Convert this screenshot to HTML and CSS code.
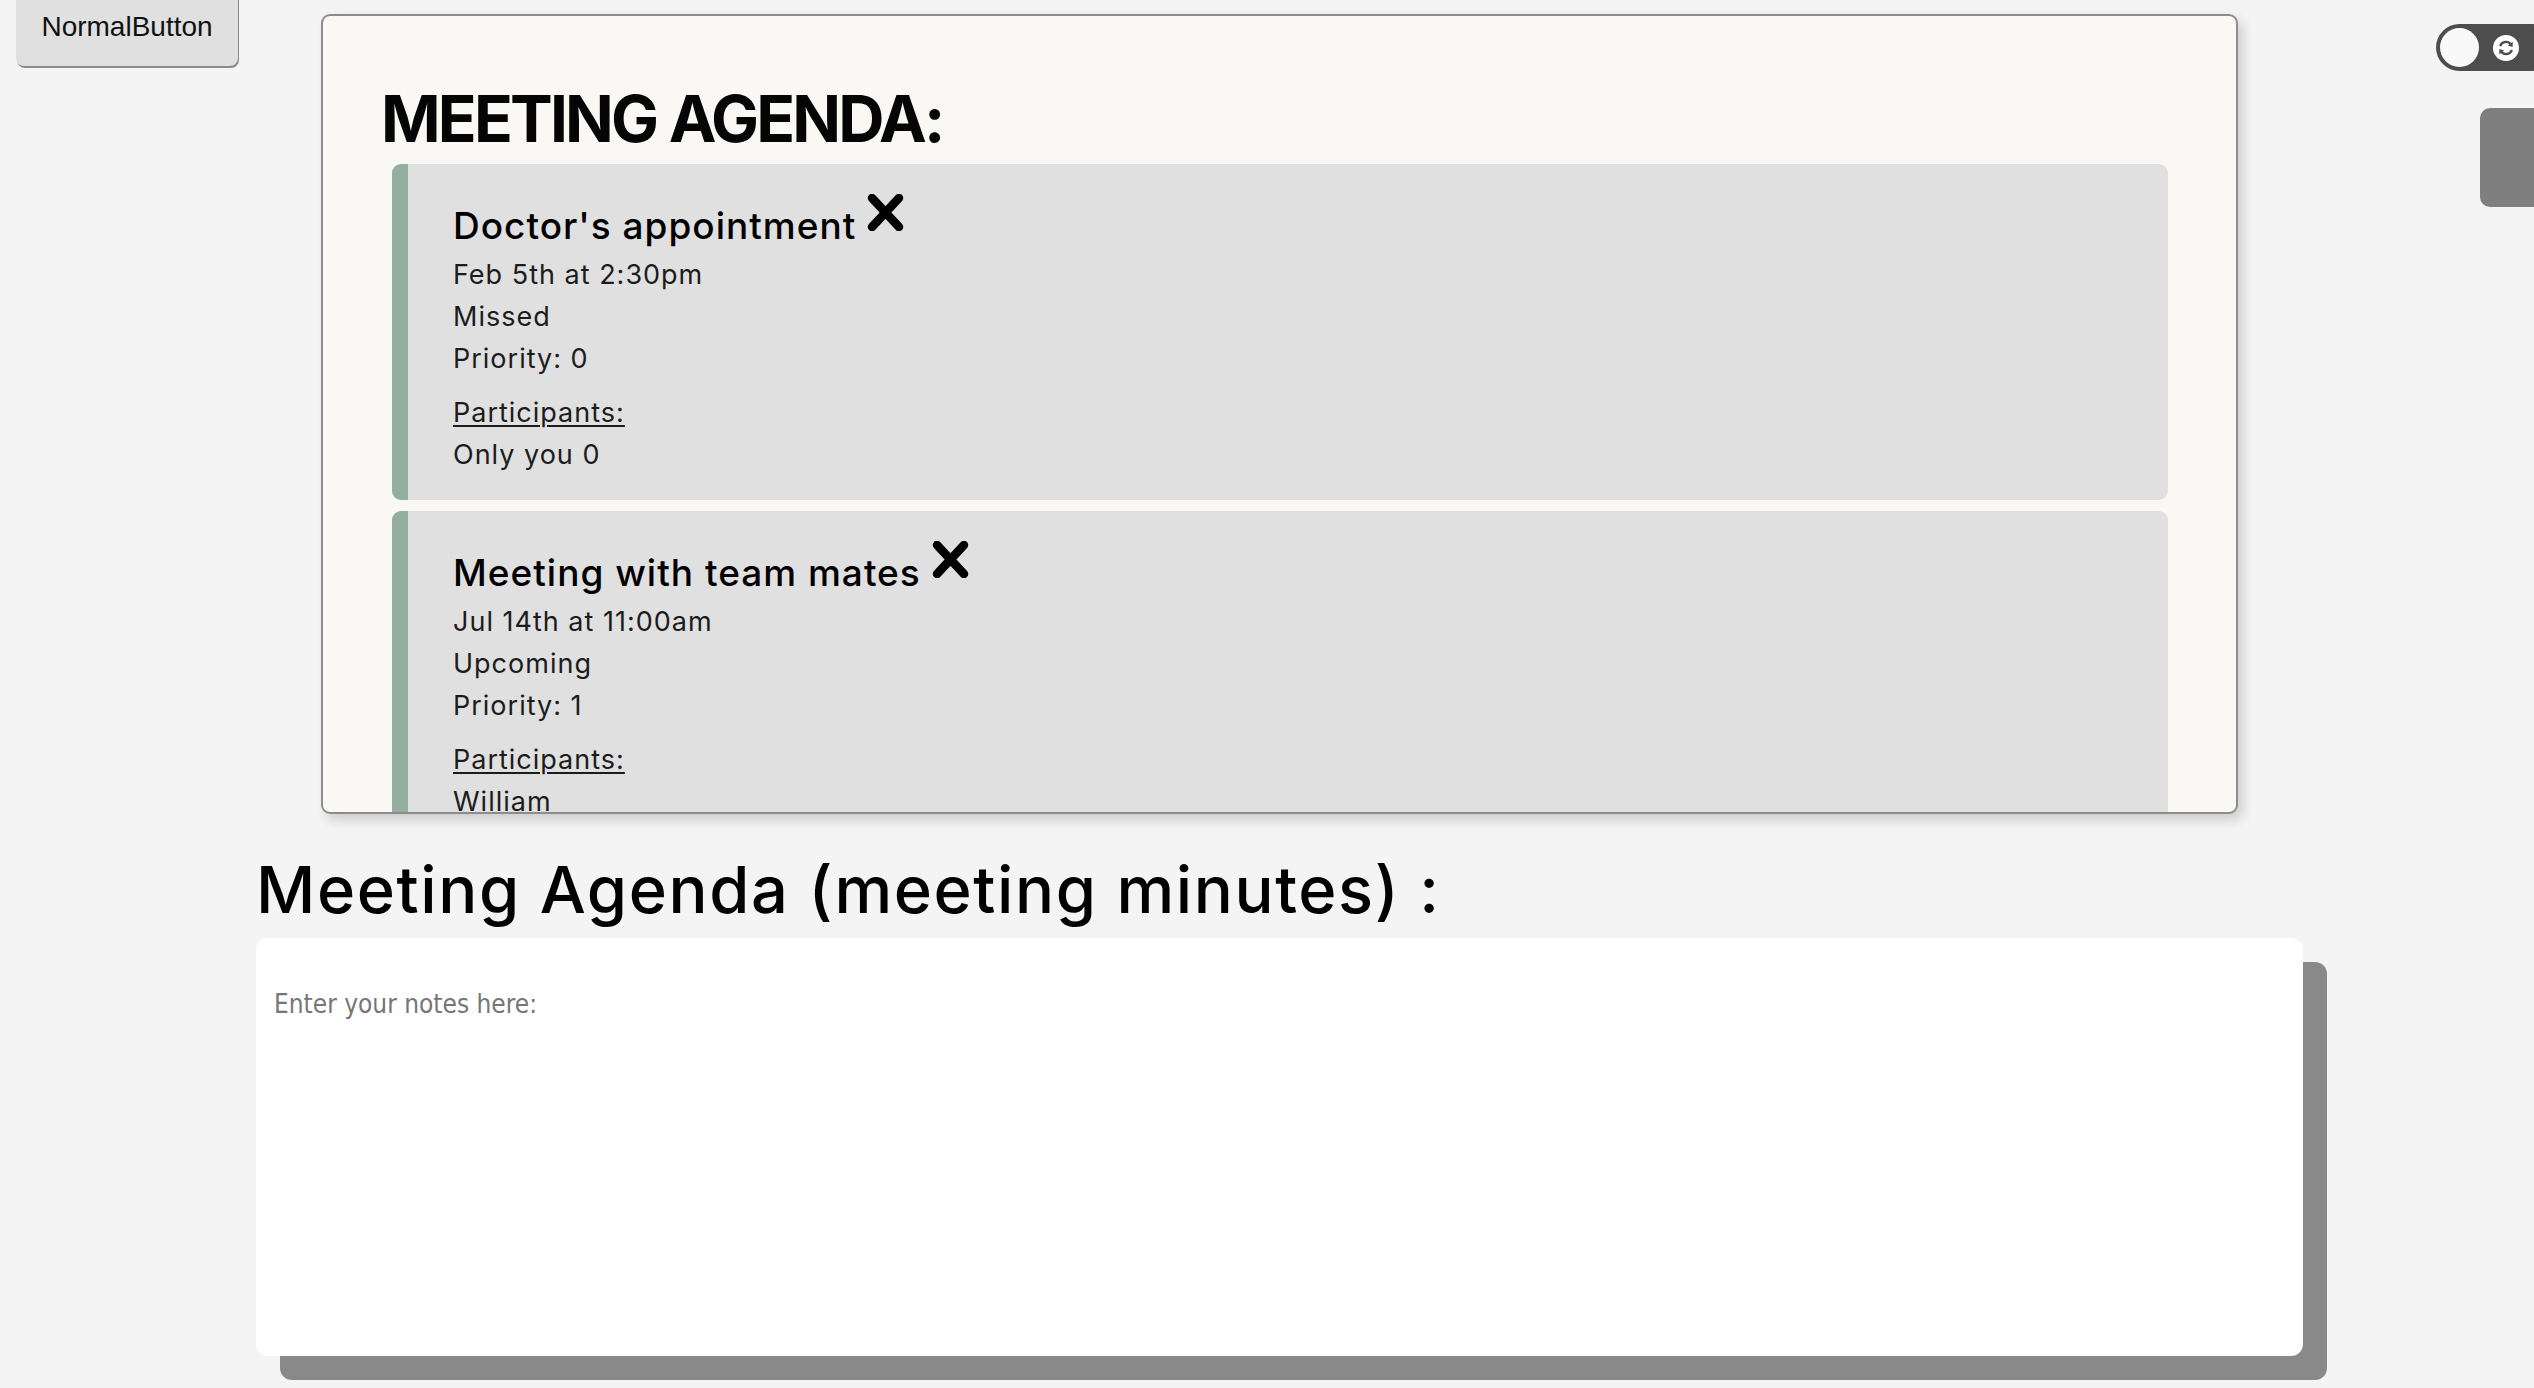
FILE: index.html
```html
<!DOCTYPE html>
<html lang="en">
<head>
<meta charset="utf-8">
<title>Meeting Agenda</title>
<link rel="stylesheet" href="styles.css">
</head>
<body>
<div class="top-row">
  <button class="normal-btn">NormalButton</button>
  <section class="agenda-panel">
    <h1 class="agenda-heading">MEETING AGENDA:</h1>
    <div class="cards">
      <article class="card">
        <h3 class="card-title"><span>Doctor's appointment</span>
          <svg class="x-icon" viewBox="0 0 37 37" aria-hidden="true"><path d="M5 4 L32 33 M32 4 L5 33" stroke="#000" stroke-width="8.5" stroke-linecap="round" fill="none"/></svg>
        </h3>
        <p class="line">Feb 5th at 2:30pm</p>
        <p class="line">Missed</p>
        <p class="line">Priority: 0</p>
        <p class="line participants">Participants:</p>
        <p class="line">Only you 0</p>
      </article>
      <article class="card">
        <h3 class="card-title"><span>Meeting with team mates</span>
          <svg class="x-icon" viewBox="0 0 37 37" aria-hidden="true"><path d="M5 4 L32 33 M32 4 L5 33" stroke="#000" stroke-width="8.5" stroke-linecap="round" fill="none"/></svg>
        </h3>
        <p class="line">Jul 14th at 11:00am</p>
        <p class="line">Upcoming</p>
        <p class="line">Priority: 1</p>
        <p class="line participants">Participants:</p>
        <p class="line">William</p>
      </article>
    </div>
  </section>
</div>

<section class="minutes">
  <h2 class="minutes-heading">Meeting Agenda (meeting minutes) :</h2>
  <textarea class="notes" placeholder="Enter your notes here:"></textarea>
</section>

<div class="theme-toggle">
  <span class="knob"></span>
  <span class="sync">
    <svg viewBox="0 0 26 26" aria-hidden="true">
      <circle cx="13" cy="13" r="13" fill="#ffffff"/>
      <path d="M7.2 11.2 A6 6 0 0 1 18.2 10" stroke="#4d4d4d" stroke-width="2.4" fill="none"/>
      <path d="M19.8 6.8 L19.6 12 L14.8 10.6 Z" fill="#4d4d4d"/>
      <path d="M18.8 14.8 A6 6 0 0 1 7.8 16" stroke="#4d4d4d" stroke-width="2.4" fill="none"/>
      <path d="M6.2 19.2 L6.4 14 L11.2 15.4 Z" fill="#4d4d4d"/>
    </svg>
  </span>
</div>
<div class="side-tab"></div>
</body>
</html>
```

FILE: styles.css
```css
html, body {
  margin: 0;
  padding: 0;
}

body {
  background: #f4f4f4;
  font-family: Inter, "Noto Sans", sans-serif;
  color: #000;
  overflow: hidden;
  height: 1388px;
}

.top-row {
  display: flex;
  align-items: flex-start;
}

.normal-btn {
  margin: -12px 0 0 16px;
  width: 222px;
  height: 78px;
  padding: 0;
  border: none;
  border-radius: 8px;
  background: #e0e0e0;
  box-shadow: 1px 2px 0 #8a8a8a;
  font-family: "Liberation Sans", Arial, sans-serif;
  font-size: 28px;
  color: #111;
  flex-shrink: 0;
}

.agenda-panel {
  margin: 14px 0 0 83px;
  width: 1917px;
  height: 800px;
  box-sizing: border-box;
  border: 2px solid #8c8c8c;
  border-radius: 9px;
  background: #f9f8f4;
  box-shadow: 5px 6px 12px rgba(0, 0, 0, 0.16);
  overflow: hidden;
  padding: 63px 68px 0 58px;
}

.agenda-heading {
  margin: 0 0 5px 0;
  font-size: 64px;
  font-weight: 700;
  line-height: 80px;
  letter-spacing: -2.8px;
  color: #050505;
}

.cards {
  display: flex;
  flex-direction: column;
  gap: 11px;
  margin-left: 11px;
}

.card {
  background: #e0e0e0;
  border-left: 16px solid #94ae9f;
  border-radius: 9px;
  padding: 36px 40px 24px 45px;
}

.card-title {
  margin: 0 0 2px 0;
  display: flex;
  align-items: flex-start;
  font-size: 37px;
  font-weight: 500;
  line-height: 52px;
  letter-spacing: 1px;
  color: #000;
}

.x-icon {
  width: 37px;
  height: 37px;
  margin: -6px 0 0 11px;
}

.line {
  margin: 0;
  font-size: 27px;
  line-height: 42px;
  letter-spacing: 1px;
  color: #1c1c1c;
}

.participants {
  margin-top: 12px;
  text-decoration: underline;
  text-underline-offset: 3px;
  text-decoration-thickness: 2px;
}

.minutes {
  margin: 36px 0 0 256px;
  width: 2047px;
}

.minutes-heading {
  margin: 0 0 9px 0;
  font-size: 65px;
  font-weight: 500;
  line-height: 79px;
  letter-spacing: 1.6px;
  color: #000;
}

.notes {
  display: block;
  width: 2047px;
  height: 418px;
  box-sizing: border-box;
  border: none;
  border-radius: 12px;
  background: #fff;
  box-shadow: 24px 24px 0 #898989;
  padding: 51px 18px 18px 18px;
  resize: none;
  outline: none;
  font-family: "DejaVu Sans Condensed", "DejaVu Sans", sans-serif;
  font-stretch: condensed;
  font-size: 26px;
  color: #333;
}

.notes::placeholder {
  color: #767676;
}

.theme-toggle {
  position: fixed;
  top: 24px;
  left: 2436px;
  width: 120px;
  height: 47px;
  border-radius: 24px;
  background: #4d4d4d;
  display: flex;
  align-items: center;
  padding-left: 4px;
  box-sizing: border-box;
}

.knob {
  width: 39px;
  height: 39px;
  border-radius: 50%;
  background: #f9f9f9;
}

.sync {
  display: flex;
  margin-left: 14px;
  width: 26px;
  height: 26px;
}

.sync svg {
  width: 26px;
  height: 26px;
}

.side-tab {
  position: fixed;
  top: 108px;
  left: 2480px;
  width: 80px;
  height: 99px;
  border-radius: 10px;
  background: #7f7f7f;
}
```
